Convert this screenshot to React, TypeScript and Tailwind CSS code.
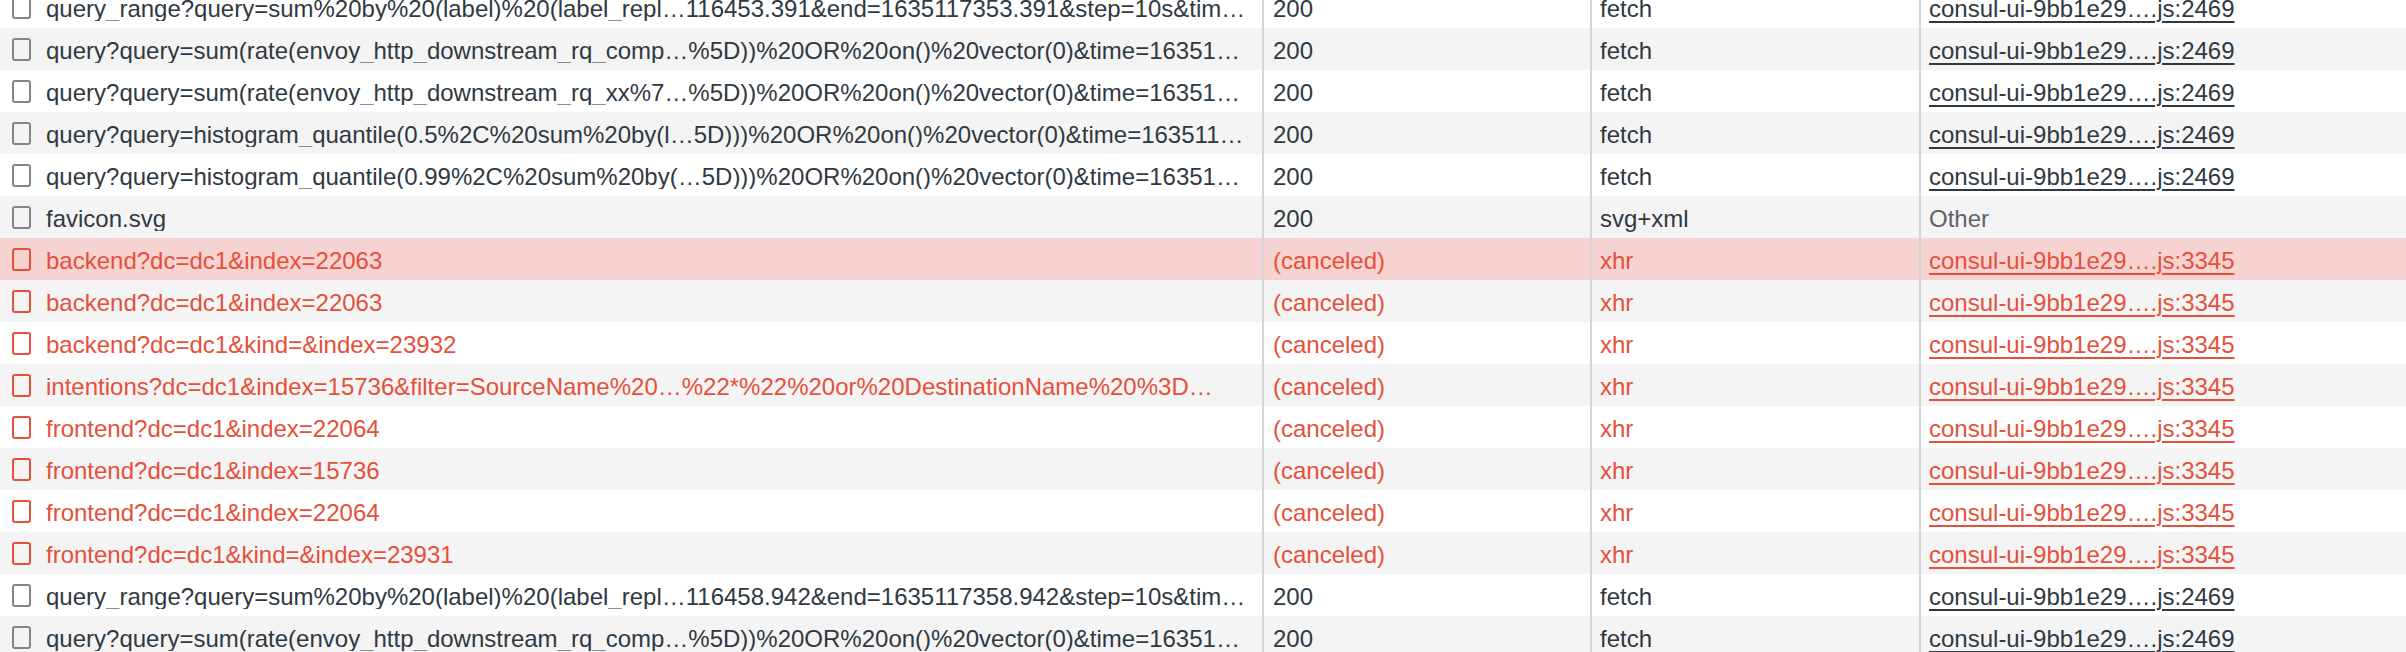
type Row = {
  name: string;
  status: string;
  type: string;
  initiator: string;
  error?: boolean;
  link?: boolean;
};

const fetchInit = "consul-ui-9bb1e29….js:2469";
const xhrInit = "consul-ui-9bb1e29….js:3345";

const rows: Row[] = [
  { name: "query_range?query=sum%20by%20(label)%20(label_repl…116453.391&end=1635117353.391&step=10s&tim…", status: "200", type: "fetch", initiator: fetchInit, link: true },
  { name: "query?query=sum(rate(envoy_http_downstream_rq_comp…%5D))%20OR%20on()%20vector(0)&time=16351…", status: "200", type: "fetch", initiator: fetchInit, link: true },
  { name: "query?query=sum(rate(envoy_http_downstream_rq_xx%7…%5D))%20OR%20on()%20vector(0)&time=16351…", status: "200", type: "fetch", initiator: fetchInit, link: true },
  { name: "query?query=histogram_quantile(0.5%2C%20sum%20by(l…5D)))%20OR%20on()%20vector(0)&time=163511…", status: "200", type: "fetch", initiator: fetchInit, link: true },
  { name: "query?query=histogram_quantile(0.99%2C%20sum%20by(…5D)))%20OR%20on()%20vector(0)&time=16351…", status: "200", type: "fetch", initiator: fetchInit, link: true },
  { name: "favicon.svg", status: "200", type: "svg+xml", initiator: "Other" },
  { name: "backend?dc=dc1&index=22063", status: "(canceled)", type: "xhr", initiator: xhrInit, error: true, link: true },
  { name: "backend?dc=dc1&index=22063", status: "(canceled)", type: "xhr", initiator: xhrInit, error: true, link: true },
  { name: "backend?dc=dc1&kind=&index=23932", status: "(canceled)", type: "xhr", initiator: xhrInit, error: true, link: true },
  { name: "intentions?dc=dc1&index=15736&filter=SourceName%20…%22*%22%20or%20DestinationName%20%3D…", status: "(canceled)", type: "xhr", initiator: xhrInit, error: true, link: true },
  { name: "frontend?dc=dc1&index=22064", status: "(canceled)", type: "xhr", initiator: xhrInit, error: true, link: true },
  { name: "frontend?dc=dc1&index=15736", status: "(canceled)", type: "xhr", initiator: xhrInit, error: true, link: true },
  { name: "frontend?dc=dc1&index=22064", status: "(canceled)", type: "xhr", initiator: xhrInit, error: true, link: true },
  { name: "frontend?dc=dc1&kind=&index=23931", status: "(canceled)", type: "xhr", initiator: xhrInit, error: true, link: true },
  { name: "query_range?query=sum%20by%20(label)%20(label_repl…116458.942&end=1635117358.942&step=10s&tim…", status: "200", type: "fetch", initiator: fetchInit, link: true },
  { name: "query?query=sum(rate(envoy_http_downstream_rq_comp…%5D))%20OR%20on()%20vector(0)&time=16351…", status: "200", type: "fetch", initiator: fetchInit, link: true },
];

export default function App() {
  return (
    <main
      className="w-[2406px] h-[652px] overflow-hidden bg-white text-[24px] leading-none text-[#303942]"
      style={{ fontFamily: '"Liberation Sans", Arial, sans-serif' }}
    >
      <div className="-mt-[14px] flex flex-col">
        {rows.map((row, i) => {
          // row 6 is the hovered one
          const bg = i === 6 ? "bg-[#f6d3d1]" : i % 2 === 1 ? "bg-[#f4f4f4]" : "bg-white";
          const color = row.error ? "text-[#e5503a]" : "text-[#303942]";
          return (
            <div key={i} className={`grid grid-cols-[1262px_328px_329px_1fr] h-[42px] ${bg} ${color}`}>
              <div className="flex items-center pl-[12px] pr-[12px] min-w-0">
                <span
                  className={`shrink-0 w-[19px] h-[23px] rounded-[3px] border-2 ${
                    row.error ? "border-[#e5503a]" : "border-[#80868b]"
                  }`}
                />
                <span className="ml-[15px] pt-[3px] whitespace-nowrap overflow-hidden text-ellipsis">{row.name}</span>
              </div>
              <div className="flex items-center border-l-2 border-[#d3d5d8] pl-[9px] pt-[3px] whitespace-nowrap overflow-hidden">
                {row.status}
              </div>
              <div className="flex items-center border-l-2 border-[#d3d5d8] pl-[8px] pt-[3px] whitespace-nowrap overflow-hidden">
                {row.type}
              </div>
              <div className="flex items-center border-l-2 border-[#d3d5d8] pl-[8px] pt-[3px] whitespace-nowrap overflow-hidden">
                {row.link ? (
                  <span className="underline decoration-[2px] underline-offset-[4px]">{row.initiator}</span>
                ) : (
                  <span className="text-[#5f6368]">{row.initiator}</span>
                )}
              </div>
            </div>
          );
        })}
      </div>
    </main>
  );
}
